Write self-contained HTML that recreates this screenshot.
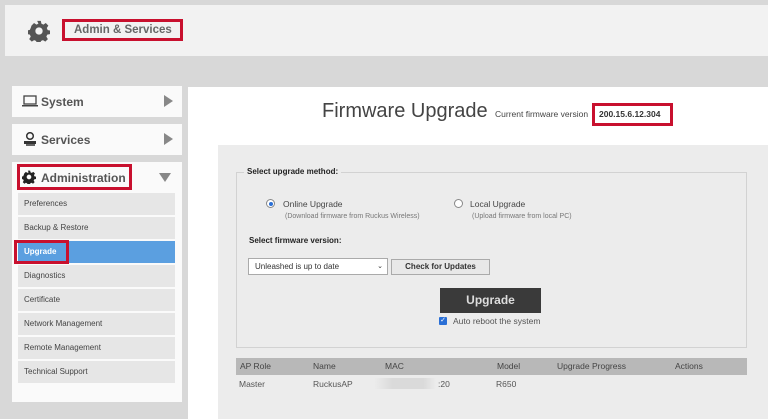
<!DOCTYPE html>
<html><head><meta charset="utf-8"><style>
*{margin:0;padding:0;box-sizing:border-box}
body{width:768px;height:419px;overflow:hidden;background:#d8d8d8;font-family:"Liberation Sans",Arial,sans-serif;position:relative}
.a{position:absolute}
.red{position:absolute;border:3px solid #c8102e}
.nav{position:absolute;left:12px;width:170px;background:#fafafa}
.sub{position:absolute;left:18px;width:157px;height:22px;background:#e6e6e6;font-size:8px;color:#444;padding-left:6px;line-height:22px}
.tri{position:absolute;width:0;height:0}
.nt{position:absolute;left:41px;font-weight:bold;font-size:12px;color:#555}
</style></head><body>
<div class="a" style="left:5px;top:5px;width:763px;height:51px;background:#f2f2f2"></div>
<svg class="a" style="left:28px;top:20px" width="22" height="22" viewBox="0 0 24 24"><path fill="#555" d="M10 1h4l.6 3 2.2 1 2.6-1.7 2.8 2.8L20.5 8.7l1 2.3 2.5.4v4l-3 .6-1 2.2 1.7 2.6-2.8 2.8-2.6-1.7-2.2 1-.6 3h-4l-.6-3-2.2-1-2.6 1.7-2.8-2.8 1.7-2.6-1-2.2-3-.6v-4l3-.6 1-2.2L3.8 6.1l2.8-2.8 2.6 1.7 2.2-1zM12 8a4 4 0 100 8 4 4 0 000-8z"/></svg>
<div class="red" style="left:62px;top:19px;width:121px;height:22px"></div>
<div class="a" style="left:74px;top:24px;font-size:11.5px;font-weight:bold;color:#666">Admin &amp; Services</div>

<div class="nav" style="top:86px;height:31px"></div>
<svg class="a" style="left:22px;top:95px" width="16" height="12" viewBox="0 0 16 12"><rect x="2" y="1" width="12" height="8" fill="none" stroke="#444" stroke-width="1.3"/><rect x="0" y="10" width="16" height="1.5" fill="#444"/></svg>
<div class="nt" style="top:95px">System</div>
<div class="tri" style="left:164px;top:95px;border-left:9px solid #888;border-top:6px solid transparent;border-bottom:6px solid transparent"></div>

<div class="nav" style="top:124px;height:31px"></div>
<svg class="a" style="left:23px;top:132px" width="15" height="15" viewBox="0 0 15 15"><circle cx="7" cy="4" r="3.3" fill="none" stroke="#333" stroke-width="1.5"/><path d="M1 9h12v3H1z" fill="#333"/><path d="M3 13h9" stroke="#333" stroke-width="1.5"/></svg>
<div class="nt" style="top:133px">Services</div>
<div class="tri" style="left:164px;top:133px;border-left:9px solid #888;border-top:6px solid transparent;border-bottom:6px solid transparent"></div>

<div class="nav" style="top:162px;height:240px"></div>
<svg class="a" style="left:22px;top:170px" width="14" height="14" viewBox="0 0 24 24"><path fill="#222" d="M10 1h4l.6 3 2.2 1 2.6-1.7 2.8 2.8L20.5 8.7l1 2.3 2.5.4v4l-3 .6-1 2.2 1.7 2.6-2.8 2.8-2.6-1.7-2.2 1-.6 3h-4l-.6-3-2.2-1-2.6 1.7-2.8-2.8 1.7-2.6-1-2.2-3-.6v-4l3-.6 1-2.2L3.8 6.1l2.8-2.8 2.6 1.7 2.2-1zM12 8a4 4 0 100 8 4 4 0 000-8z"/></svg>
<div class="red" style="left:17px;top:164px;width:115px;height:26px"></div>
<div class="nt" style="top:171px">Administration</div>
<div class="tri" style="left:159px;top:173px;border-top:9px solid #888;border-left:6px solid transparent;border-right:6px solid transparent"></div>

<div class="sub" style="top:193px">Preferences</div>
<div class="sub" style="top:217px">Backup &amp; Restore</div>
<div class="sub" style="top:241px;background:#5b9fe0;color:#fff;font-weight:bold">Upgrade</div>
<div class="red" style="left:14px;top:240px;width:55px;height:24px"></div>
<div class="sub" style="top:265px">Diagnostics</div>
<div class="sub" style="top:289px">Certificate</div>
<div class="sub" style="top:313px">Network Management</div>
<div class="sub" style="top:337px">Remote Management</div>
<div class="sub" style="top:361px">Technical Support</div>

<div class="a" style="left:188px;top:87px;width:580px;height:332px;background:#fff"></div>
<div class="a" style="left:322px;top:100px;font-size:20px;color:#444">Firmware Upgrade</div>
<div class="a" style="left:495px;top:109px;font-size:8.5px;color:#444">Current firmware version</div>
<div class="red" style="left:592px;top:103px;width:81px;height:23px"></div>
<div class="a" style="left:599px;top:109px;font-size:8.5px;font-weight:bold;color:#333">200.15.6.12.304</div>

<div class="a" style="left:218px;top:145px;width:550px;height:274px;background:#ececec"></div>
<div class="a" style="left:236px;top:172px;width:511px;height:176px;border:1px solid #d2d2d2"></div>
<div class="a" style="left:244px;top:167px;padding:0 3px;background:#ececec;font-size:8px;font-weight:bold;color:#222">Select upgrade method:</div>
<div class="a" style="left:266px;top:199px;width:9px;height:9px;border-radius:50%;border:1px solid #888;background:#fff"><div style="margin:1.5px;width:4px;height:4px;border-radius:50%;background:#2a6fd6"></div></div>
<div class="a" style="left:283px;top:199px;font-size:8.5px;color:#444">Online Upgrade</div>
<div class="a" style="left:285px;top:213px;font-size:7px;color:#777">(Download firmware from Ruckus Wireless)</div>
<div class="a" style="left:454px;top:199px;width:9px;height:9px;border-radius:50%;border:1px solid #888;background:#fff"></div>
<div class="a" style="left:470px;top:199px;font-size:8.5px;color:#444">Local Upgrade</div>
<div class="a" style="left:472px;top:213px;font-size:7px;color:#777">(Upload firmware from local PC)</div>
<div class="a" style="left:249px;top:236px;font-size:8px;font-weight:bold;color:#222">Select firmware version:</div>
<div class="a" style="left:248px;top:258px;width:140px;height:17px;border:1px solid #aaa;background:#fff;font-size:8px;color:#333;padding:3px 0 0 6px">Unleashed is up to date<span style="position:absolute;right:4px;top:3px;font-size:7px">&#8964;</span></div>
<div class="a" style="left:391px;top:259px;width:99px;height:16px;border:1px solid #aaa;background:#e8e8e8;font-size:8px;font-weight:bold;color:#333;text-align:center;line-height:14px">Check for Updates</div>
<div class="a" style="left:440px;top:288px;width:101px;height:25px;background:#3a3a3a;color:#ddd;font-weight:bold;font-size:12px;text-align:center;line-height:25px">Upgrade</div>
<div class="a" style="left:439px;top:317px;width:8px;height:8px;background:#2a6fd6;border-radius:1px;color:#fff;font-size:7px;line-height:8px;text-align:center">✓</div>
<div class="a" style="left:453px;top:316px;font-size:8.5px;color:#555">Auto reboot the system</div>

<div class="a" style="left:236px;top:358px;width:511px;height:17px;background:#b8b8b8"></div>
<div class="a" style="top:361px;left:240px;font-size:8.5px;color:#444">AP Role</div>
<div class="a" style="top:361px;left:313px;font-size:8.5px;color:#444">Name</div>
<div class="a" style="top:361px;left:385px;font-size:8.5px;color:#444">MAC</div>
<div class="a" style="top:361px;left:497px;font-size:8.5px;color:#444">Model</div>
<div class="a" style="top:361px;left:557px;font-size:8.5px;color:#444">Upgrade Progress</div>
<div class="a" style="top:361px;left:675px;font-size:8.5px;color:#444">Actions</div>
<div class="a" style="top:379px;left:239px;font-size:8.5px;color:#555">Master</div>
<div class="a" style="top:379px;left:313px;font-size:8.5px;color:#555">RuckusAP</div>
<div class="a" style="top:378px;left:374px;width:62px;height:11px;background:linear-gradient(90deg,#ececec,#dadada 30%,#dadada 80%,#ececec)"></div>
<div class="a" style="top:379px;left:438px;font-size:8.5px;color:#555">:20</div>
<div class="a" style="top:379px;left:496px;font-size:8.5px;color:#555">R650</div>
</body></html>
